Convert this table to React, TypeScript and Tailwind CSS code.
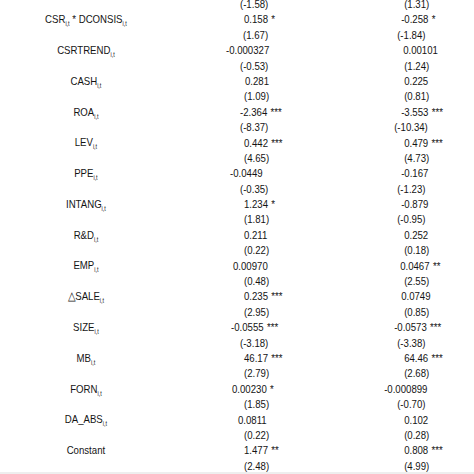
import React from "react";

type Row = {
    label?: React.ReactNode;
    c1: string;
    s1?: string;
    x1: number;
    c2: string;
    s2?: string;
    x2: number;
};

// horizontal squeeze of the scanned table
const SX = 0.83;
const COL1 = 220;
const COL2 = 380;

const Sub = () => (
    <span className="text-[6.5px] align-sub leading-none">i,t</span>
);

const Var = ({ name }: { name: string }) => (
    <>
        {name}
        <Sub />
    </>
);

const rows: Row[] = [
    { c1: "(-1.58)", x1: 240, c2: "(1.31)", x2: 404 },
    {
        label: (
            <>
                CSR
                <Sub /> * DCONSIS
                <Sub />
            </>
        ),
        c1: "0.158",
        s1: "*",
        x1: 244,
        c2: "-0.258",
        s2: "*",
        x2: 401,
    },
    { c1: "(1.67)", x1: 243, c2: "(-1.84)", x2: 397 },
    { label: <Var name="CSRTREND" />, c1: "-0.000327", x1: 226, c2: "0.00101", x2: 403 },
    { c1: "(-0.53)", x1: 240, c2: "(1.24)", x2: 404 },
    { label: <Var name="CASH" />, c1: "0.281", x1: 245, c2: "0.225", x2: 404 },
    { c1: "(1.09)", x1: 244, c2: "(0.81)", x2: 404 },
    { label: <Var name="ROA" />, c1: "-2.364", s1: "***", x1: 240, c2: "-3.553", s2: "***", x2: 401 },
    { c1: "(-8.37)", x1: 240, c2: "(-10.34)", x2: 394 },
    { label: <Var name="LEV" />, c1: "0.442", s1: "***", x1: 244, c2: "0.479", s2: "***", x2: 404 },
    { c1: "(4.65)", x1: 244, c2: "(4.73)", x2: 404 },
    { label: <Var name="PPE" />, c1: "-0.0449", x1: 230, c2: "-0.167", x2: 401 },
    { c1: "(-0.35)", x1: 240, c2: "(-1.23)", x2: 397 },
    { label: <Var name="INTANG" />, c1: "1.234", s1: "*", x1: 244, c2: "-0.879", x2: 401 },
    { c1: "(1.81)", x1: 244, c2: "(-0.95)", x2: 397 },
    { label: <Var name="R&D" />, c1: "0.211", x1: 244, c2: "0.252", x2: 404 },
    { c1: "(0.22)", x1: 244, c2: "(0.18)", x2: 404 },
    { label: <Var name="EMP" />, c1: "0.00970", x1: 233, c2: "0.0467", s2: "**", x2: 400 },
    { c1: "(0.48)", x1: 244, c2: "(2.55)", x2: 404 },
    { label: <Var name="△SALE" />, c1: "0.235", s1: "***", x1: 244, c2: "0.0749", x2: 401 },
    { c1: "(2.95)", x1: 244, c2: "(0.85)", x2: 404 },
    { label: <Var name="SIZE" />, c1: "-0.0555", s1: "***", x1: 231, c2: "-0.0573", s2: "***", x2: 394 },
    { c1: "(-3.18)", x1: 240, c2: "(-3.38)", x2: 397 },
    { label: <Var name="MB" />, c1: "46.17", s1: "***", x1: 244, c2: "64.46", s2: "***", x2: 404 },
    { c1: "(2.79)", x1: 244, c2: "(2.68)", x2: 404 },
    { label: <Var name="FORN" />, c1: "0.00230", s1: "*", x1: 232, c2: "-0.000899", x2: 384 },
    { c1: "(1.85)", x1: 244, c2: "(-0.70)", x2: 397 },
    { label: <Var name="DA_ABS" />, c1: "0.0811", x1: 238, c2: "0.102", x2: 404 },
    { c1: "(0.22)", x1: 244, c2: "(0.28)", x2: 404 },
    { label: "Constant", c1: "1.477", s1: "**", x1: 244, c2: "0.808", s2: "***", x2: 404 },
    { c1: "(2.48)", x1: 244, c2: "(4.99)", x2: 404 },
];

function Cell({ value, stars, pad, wide }: { value: string; stars?: string; pad: number; wide?: boolean }) {
    return (
        <div
            className={wide ? "w-[193px] shrink-0 whitespace-nowrap" : "flex-1 whitespace-nowrap"}
            style={{ paddingLeft: pad / SX }}
        >
            {value}
            {stars && <span className="ml-[4px]">{stars}</span>}
        </div>
    );
}

export default function App() {
    return (
        <div className="relative w-[474px] h-[474px] overflow-hidden bg-white text-[#141414] font-['Liberation_Sans',Arial,sans-serif]">
            <div className="w-[571px] -mt-[4px] origin-top-left scale-x-[0.83] text-[11.6px]">
                {rows.map((r, i) => (
                    <div key={i} className="flex h-[15.4px] items-center">
                        <div className="w-[207px] shrink-0 text-center whitespace-nowrap">
                            {r.label}
                        </div>
                        <div className="w-[58px] shrink-0" />
                        <Cell value={r.c1} stars={r.s1} pad={r.x1 - COL1} wide />
                        <Cell value={r.c2} stars={r.s2} pad={r.x2 - COL2} />
                    </div>
                ))}
            </div>
            <div className="absolute bottom-0 left-0 w-full h-[2px] bg-[#eeeeee]" />
        </div>
    );
}
